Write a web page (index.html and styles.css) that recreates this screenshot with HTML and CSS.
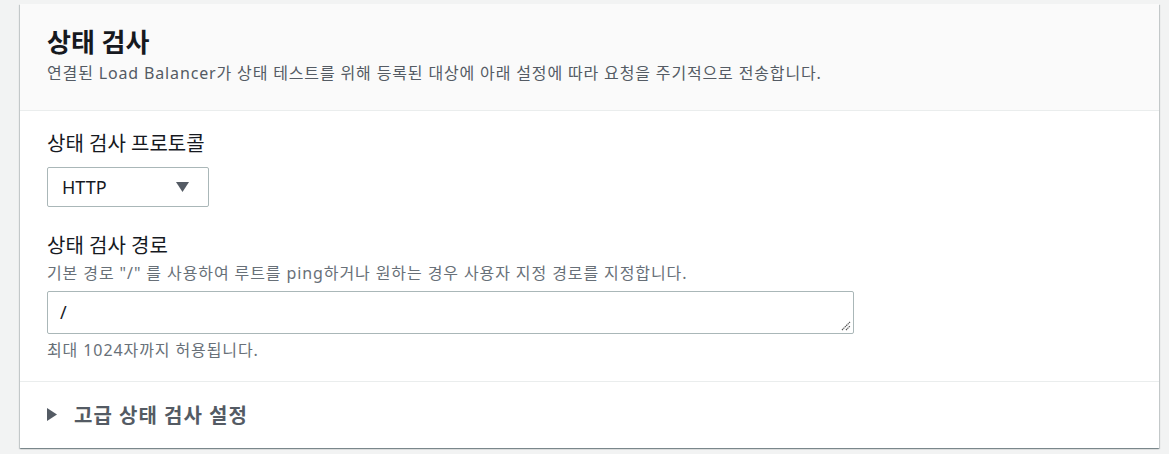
FILE: index.html
```html
<!DOCTYPE html>
<html lang="ko">
<head>
<meta charset="utf-8">
<link rel="stylesheet" href="styles.css">
</head>
<body>
<div class="card">
  <div class="card-header">
    <h2 class="title">상태 검사</h2>
    <p class="desc">연결된 Load Balancer가 상태 테스트를 위해 등록된 대상에 아래 설정에 따라 요청을 주기적으로 전송합니다.</p>
  </div>
  <div class="card-body">
    <div class="field">
      <div class="label">상태 검사 프로토콜</div>
      <div class="select">
        <span class="select-value">HTTP</span>
        <svg class="caret" width="13" height="10" viewBox="0 0 13 10"><polygon points="0,0 13,0 6.5,10" fill="#545b64"/></svg>
      </div>
    </div>
    <div class="field field-path">
      <div class="label">상태 검사 경로</div>
      <div class="hint">기본 경로 "/" 를 사용하여 루트를 ping하거나 원하는 경우 사용자 지정 경로를 지정합니다.</div>
      <div class="textarea">
        <span class="textarea-value">/</span>
        <svg class="grip" width="10" height="10" viewBox="0 0 10 10"><path d="M1 9 L9 1 M5 9 L9 5" stroke="#555" stroke-width="1.2" stroke-dasharray="1.4 0.6"/></svg>
      </div>
      <div class="constraint">최대 1024자까지 허용됩니다.</div>
    </div>
  </div>
  <div class="expander">
    <svg class="expander-icon" width="10" height="13" viewBox="0 0 10 13"><polygon points="0,0 10,6.5 0,13" fill="#545b64"/></svg>
    <span class="expander-text">고급 상태 검사 설정</span>
  </div>
</div>
</body>
</html>
```
FILE: styles.css
```css
html, body {
  margin: 0;
  padding: 0;
  background: #f2f3f3;
}
body {
  padding: 4px 10px 6px 20px;
  font-family: "Noto Sans", "Noto Sans CJK KR", sans-serif;
  color: #16191f;
}
.card {
  background: #ffffff;
  box-shadow: 0 1px 1px 0 rgba(0,28,36,.3), 1px 1px 1px 0 rgba(0,28,36,.15), -1px 1px 1px 0 rgba(0,28,36,.15);
}
.card-header {
  background: #fafafa;
  border-bottom: 1px solid #eaeded;
  padding: 22px 27px 0 27px;
  height: 107px;
  box-sizing: border-box;
}
.title {
  margin: 0;
  font-size: 26px;
  font-weight: 700;
  line-height: 32px;
  color: #16191f;
}
.desc {
  margin: 4px 0 0 0;
  font-size: 16px;
  letter-spacing: 0.85px;
  line-height: 22px;
  color: #545b64;
}
.card-body {
  padding: 19px 27px 20px 27px;
  border-bottom: 1px solid #eaeded;
}
.label {
  font-size: 20px;
  line-height: 28px;
  color: #16191f;
}
.select {
  margin-top: 9px;
  width: 162px;
  height: 40px;
  box-sizing: border-box;
  border: 1px solid #aab7b8;
  border-radius: 2px;
  display: flex;
  align-items: center;
  justify-content: space-between;
  padding: 0 19px 0 14px;
}
.select-value {
  font-size: 18px;
  color: #16191f;
}
.field-path {
  margin-top: 25px;
}
.hint {
  margin-top: 2px;
  font-size: 16px;
  letter-spacing: 0.9px;
  line-height: 22px;
  color: #687078;
}
.textarea {
  margin-top: 7px;
  width: 807px;
  height: 43px;
  box-sizing: border-box;
  border: 1px solid #aab7b8;
  border-radius: 2px;
  position: relative;
  padding: 8px 12px;
}
.textarea-value {
  font-size: 18px;
  line-height: 24px;
}
.grip {
  position: absolute;
  right: 2px;
  bottom: 2px;
}
.constraint {
  margin-top: 5px;
  font-size: 16px;
  letter-spacing: 0.9px;
  line-height: 22px;
  color: #687078;
}
.expander {
  display: flex;
  align-items: center;
  padding: 0 27px 2px 27px;
  height: 66px;
  box-sizing: border-box;
}
.expander-icon {
  margin-right: 17px;
}
.expander-text {
  font-size: 20px;
  font-weight: 700;
  letter-spacing: 1px;
  color: #545b64;
}
```
